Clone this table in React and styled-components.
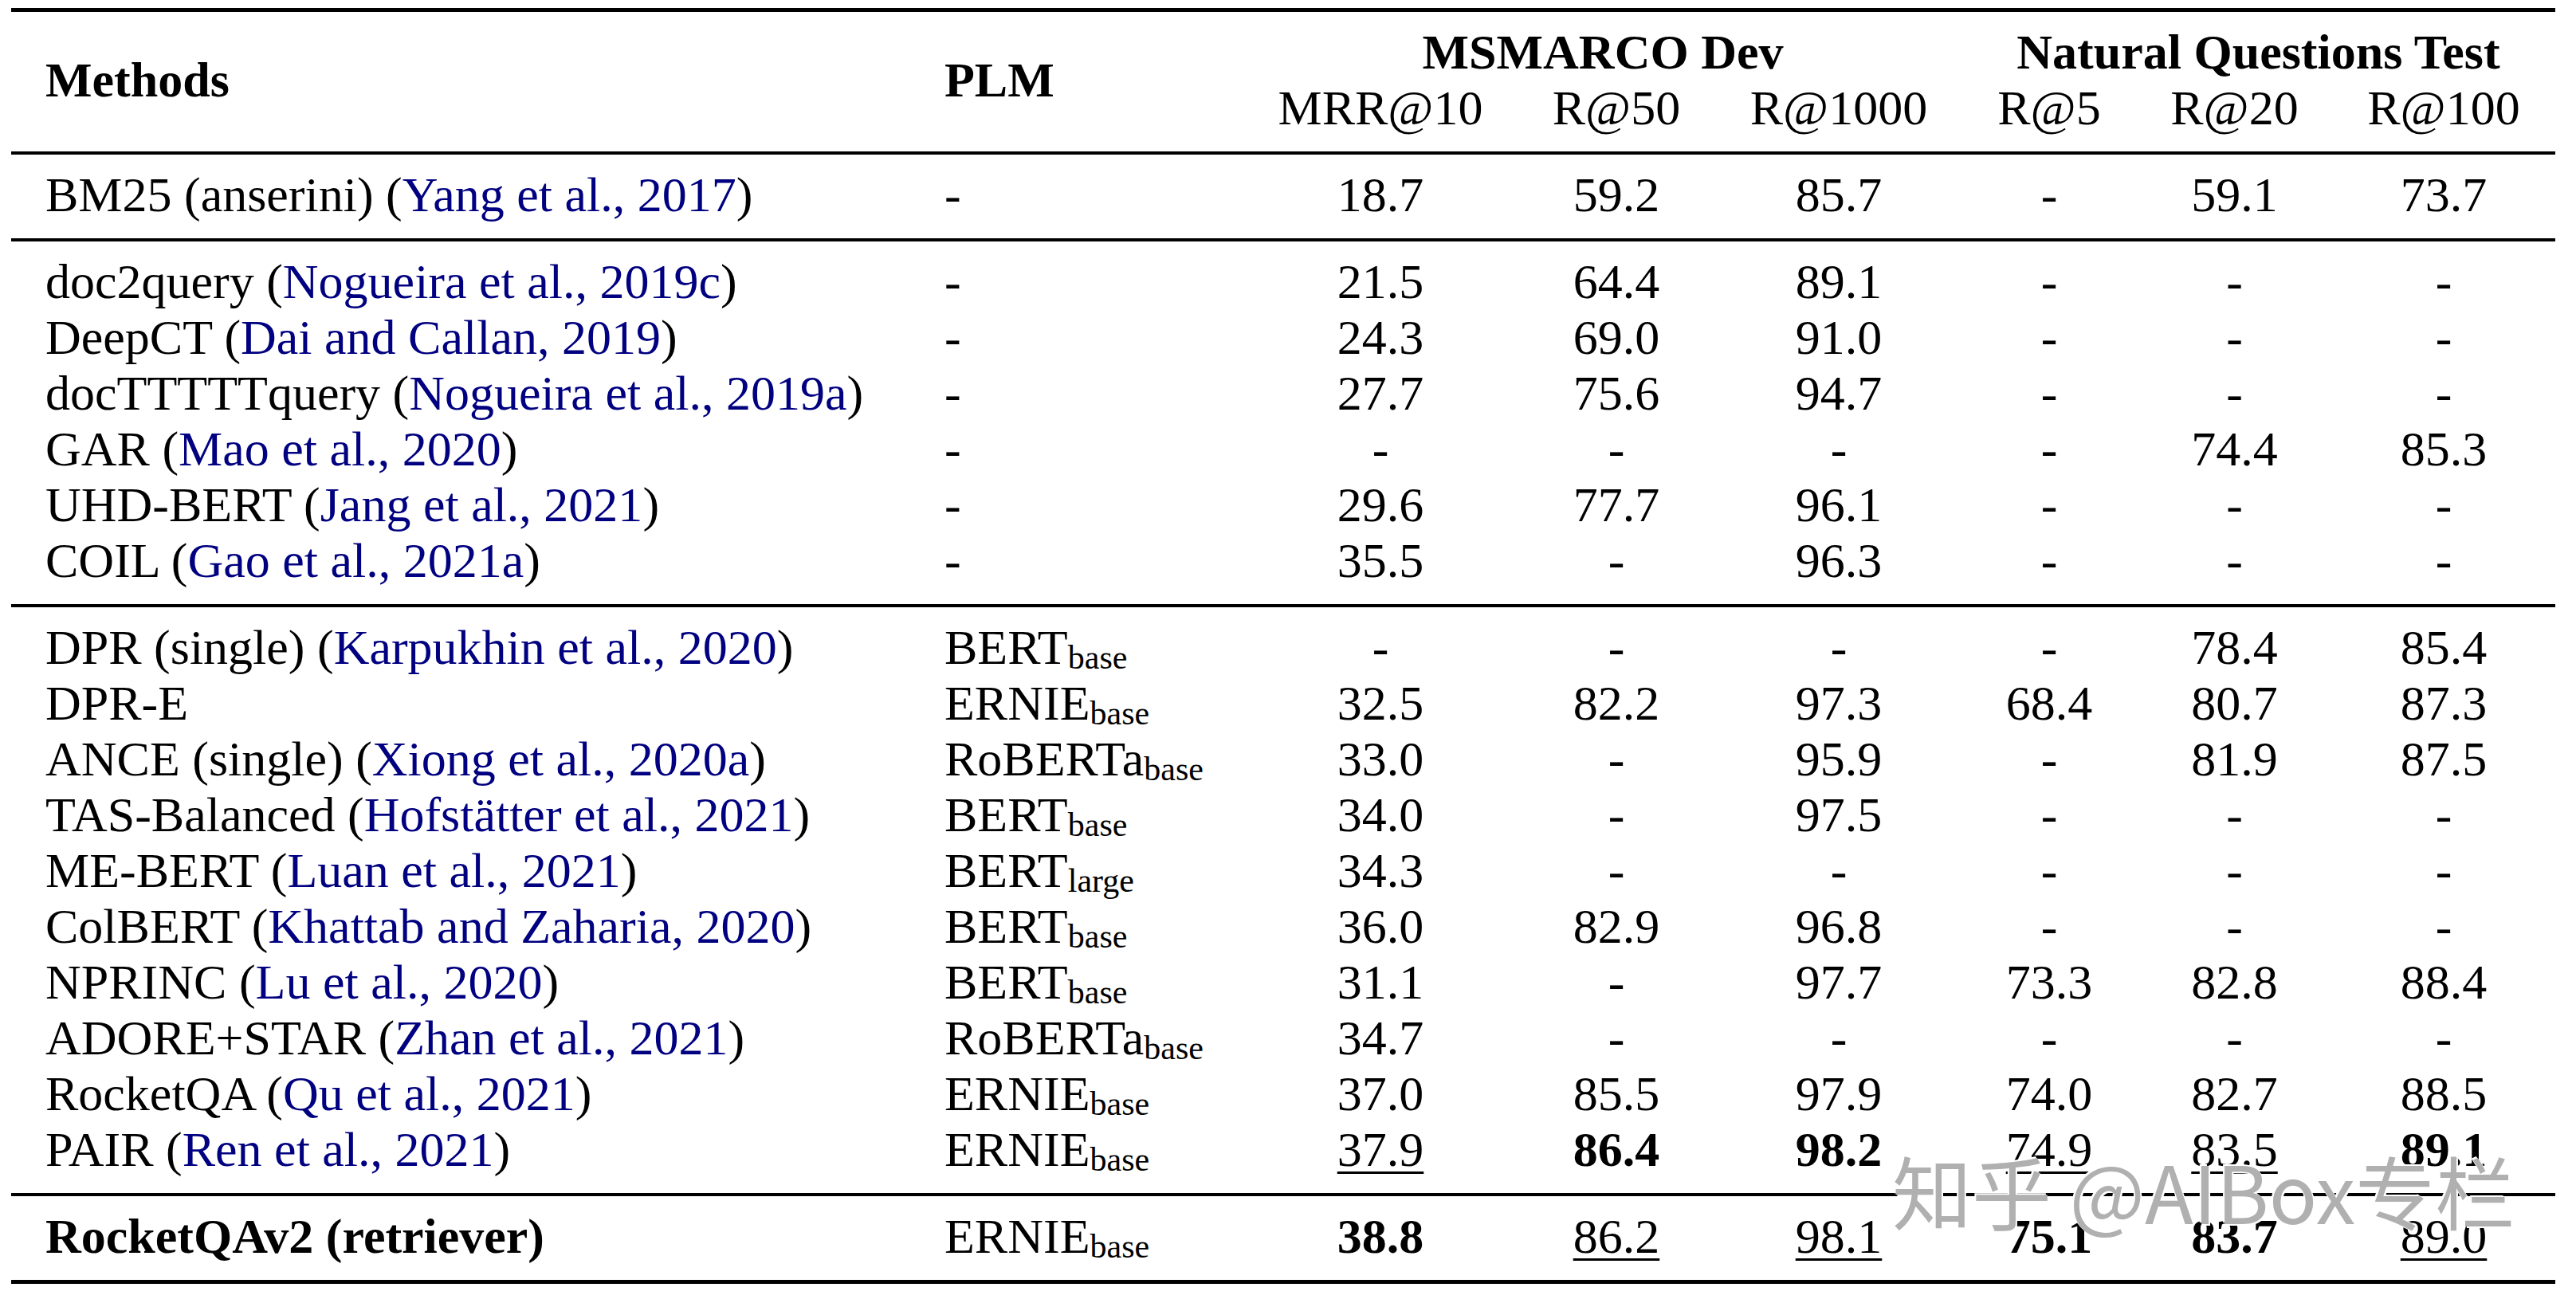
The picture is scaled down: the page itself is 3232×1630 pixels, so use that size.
import React from 'react';
import styled, { createGlobalStyle } from 'styled-components';

const Global = createGlobalStyle`
  html, body { margin: 0; padding: 0; background: #fff; }
  body { font-family: "Liberation Serif", "Times New Roman", serif; color: #000; }
`;

const COLS = '1129px 418px 342px 250px 308px 220px 245px 280px';

const Page = styled.div`
  position: relative;
  width: 3232px;
  height: 1630px;
  padding: 10px 14px 0;
  box-sizing: border-box;
  overflow: hidden;
`;

const Table = styled.div`
  width: 3192px;
  border-top: 5px solid #000;
  border-bottom: 5px solid #000;
  font-size: 62px;
  line-height: 70px;
`;

const Group = styled.div`
  display: grid;
  grid-template-columns: ${COLS};
  grid-auto-rows: 70px;
  padding: 15px 0 20px;
  & + & { border-top: 4px solid #000; }
`;

const Cell = styled.div`
  white-space: nowrap;
  text-align: ${p => (p.$left ? 'left' : 'center')};
  padding-left: ${p => p.$pad || 0}px;
  font-weight: ${p => (p.$bold ? 700 : 400)};
`;

const HeadCell = styled(Cell)`
  font-weight: 700;
  grid-row: span 2;
  align-self: center;
`;

const SpanHead = styled(Cell)`
  font-weight: 700;
  grid-column: span 3;
`;

const Cite = styled.span`
  color: #000080;
`;

const Sub = styled.span`
  font-size: 42px;
  line-height: 0;
  vertical-align: -6px;
`;

const Num = styled.span`
  font-weight: ${p => (p.$bold ? 700 : 400)};
  text-decoration: ${p => (p.$under ? 'underline' : 'none')};
  text-decoration-thickness: 3px;
  text-underline-offset: 7px;
`;

const Watermark = styled.div`
  position: absolute;
  left: 2374px;
  top: 1443px;
  font-family: "Noto Sans CJK SC", "Noto Sans", sans-serif;
  font-size: 100px;
  line-height: 1;
  color: #b0b0b0;
  white-space: nowrap;
  text-shadow: 2px 2px 0 #fff, -2px -2px 0 #fff;
  pointer-events: none;
`;

const groups = [
  [
    { name: 'BM25 (anserini)', cite: 'Yang et al., 2017', plm: null, v: ['18.7', '59.2', '85.7', '-', '59.1', '73.7'] },
  ],
  [
    { name: 'doc2query', cite: 'Nogueira et al., 2019c', plm: null, v: ['21.5', '64.4', '89.1', '-', '-', '-'] },
    { name: 'DeepCT', cite: 'Dai and Callan, 2019', plm: null, v: ['24.3', '69.0', '91.0', '-', '-', '-'] },
    { name: 'docTTTTTquery', cite: 'Nogueira et al., 2019a', plm: null, v: ['27.7', '75.6', '94.7', '-', '-', '-'] },
    { name: 'GAR', cite: 'Mao et al., 2020', plm: null, v: ['-', '-', '-', '-', '74.4', '85.3'] },
    { name: 'UHD-BERT', cite: 'Jang et al., 2021', plm: null, v: ['29.6', '77.7', '96.1', '-', '-', '-'] },
    { name: 'COIL', cite: 'Gao et al., 2021a', plm: null, v: ['35.5', '-', '96.3', '-', '-', '-'] },
  ],
  [
    { name: 'DPR (single)', cite: 'Karpukhin et al., 2020', plm: ['BERT', 'base'], v: ['-', '-', '-', '-', '78.4', '85.4'] },
    { name: 'DPR-E', cite: null, plm: ['ERNIE', 'base'], v: ['32.5', '82.2', '97.3', '68.4', '80.7', '87.3'] },
    { name: 'ANCE (single)', cite: 'Xiong et al., 2020a', plm: ['RoBERTa', 'base'], v: ['33.0', '-', '95.9', '-', '81.9', '87.5'] },
    { name: 'TAS-Balanced', cite: 'Hofstätter et al., 2021', plm: ['BERT', 'base'], v: ['34.0', '-', '97.5', '-', '-', '-'] },
    { name: 'ME-BERT', cite: 'Luan et al., 2021', plm: ['BERT', 'large'], v: ['34.3', '-', '-', '-', '-', '-'] },
    { name: 'ColBERT', cite: 'Khattab and Zaharia, 2020', plm: ['BERT', 'base'], v: ['36.0', '82.9', '96.8', '-', '-', '-'] },
    { name: 'NPRINC', cite: 'Lu et al., 2020', plm: ['BERT', 'base'], v: ['31.1', '-', '97.7', '73.3', '82.8', '88.4'] },
    { name: 'ADORE+STAR', cite: 'Zhan et al., 2021', plm: ['RoBERTa', 'base'], v: ['34.7', '-', '-', '-', '-', '-'] },
    { name: 'RocketQA', cite: 'Qu et al., 2021', plm: ['ERNIE', 'base'], v: ['37.0', '85.5', '97.9', '74.0', '82.7', '88.5'] },
    { name: 'PAIR', cite: 'Ren et al., 2021', plm: ['ERNIE', 'base'], v: ['_37.9', '*86.4', '*98.2', '_74.9', '_83.5', '*89.1'] },
  ],
  [
    { name: 'RocketQAv2 (retriever)', bold: true, cite: null, plm: ['ERNIE', 'base'], v: ['*38.8', '_86.2', '_98.1', '*75.1', '*83.7', '_89.0'] },
  ],
];

function Value({ raw }) {
  const bold = raw.startsWith('*');
  const under = raw.startsWith('_');
  const text = bold || under ? raw.slice(1) : raw;
  return (
    <Num $bold={bold} $under={under}>
      {text}
    </Num>
  );
}

function Row({ row }) {
  return (
    <>
      <Cell $left $pad={43} $bold={row.bold}>
        {row.name}
        {row.cite && (
          <>
            {' ('}
            <Cite>{row.cite}</Cite>
            {')'}
          </>
        )}
      </Cell>
      <Cell $left $pad={42}>
        {row.plm ? (
          <>
            {row.plm[0]}
            <Sub>{row.plm[1]}</Sub>
          </>
        ) : (
          '-'
        )}
      </Cell>
      {row.v.map((x, i) => (
        <Cell key={i}>
          <Value raw={x} />
        </Cell>
      ))}
    </>
  );
}

export default function App() {
  return (
    <Page>
      <Global />
      <Table>
        <Group>
          <HeadCell $left $pad={43}>Methods</HeadCell>
          <HeadCell $left $pad={42}>PLM</HeadCell>
          <SpanHead>MSMARCO Dev</SpanHead>
          <SpanHead>Natural Questions Test</SpanHead>
          {['MRR@10', 'R@50', 'R@1000', 'R@5', 'R@20', 'R@100'].map(h => (
            <Cell key={h}>{h}</Cell>
          ))}
        </Group>
        {groups.map((g, gi) => (
          <Group key={gi}>
            {g.map((row, ri) => (
              <Row key={ri} row={row} />
            ))}
          </Group>
        ))}
      </Table>
      <Watermark>知乎 @AIBox专栏</Watermark>
    </Page>
  );
}
